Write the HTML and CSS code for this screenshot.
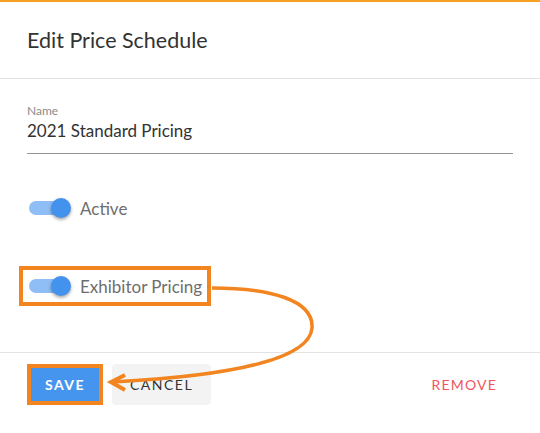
FILE: index.html
```html
<!DOCTYPE html>
<html>
<head>
<meta charset="utf-8">
<link rel="stylesheet" href="styles.css">
</head>
<body>
<div class="dialog">
  <div class="header">
    <h1 class="title">Edit Price Schedule</h1>
  </div>
  <div class="content">
    <div class="field">
      <div class="field-label">Name</div>
      <div class="field-value">2021 Standard Pricing</div>
    </div>
    <div class="switch-row">
      <span class="switch"><span class="track"></span><span class="thumb"></span></span>
      <span class="switch-label">Active</span>
    </div>
    <div class="switch-row highlight">
      <span class="switch"><span class="track"></span><span class="thumb"></span></span>
      <span class="switch-label">Exhibitor Pricing</span>
    </div>
  </div>
  <div class="actions">
    <button class="btn btn-save">SAVE</button>
    <button class="btn btn-cancel">CANCEL</button>
    <span class="spacer"></span>
    <button class="btn btn-remove">REMOVE</button>
  </div>
</div>
<svg class="annotation" width="540" height="433" viewBox="0 0 540 433">
  <path d="M212,288 C270,288 314,300 312,328 C310,355 250,375 113,382" fill="none" stroke="#f28520" stroke-width="3.5"/>
  <polyline points="125,375 111,382 125,390" fill="none" stroke="#f28520" stroke-width="4"/>
</svg>
</body>
</html>
```
FILE: styles.css
```css
html, body {
  margin: 0;
  padding: 0;
  background: #fff;
}
body {
  font-family: Lato, "Noto Sans", sans-serif;
  color: #333;
  width: 540px;
  height: 433px;
  position: relative;
  overflow: hidden;
}
.dialog {
  border-top: 2px solid #f6a024;
}
.header {
  height: 76px;
  display: flex;
  align-items: center;
  padding: 0 27px;
  border-bottom: 1px solid #e3e3e3;
}
.title {
  margin: 0;
  font-size: 21.5px;
  font-weight: 400;
  color: #333;
}
.content {
  padding: 24px 27px 0 27px;
  display: flex;
  flex-direction: column;
}
.field {
  border-bottom: 1px solid #949494;
  padding-bottom: 10px;
}
.field-label {
  font-size: 12px;
  line-height: 16px;
  color: #8a8a8a;
}
.field-value {
  font-size: 17px;
  line-height: 24px;
  color: #333;
}
.switch-row {
  display: flex;
  align-items: center;
  height: 32px;
  padding: 0 5px 0 6px;
  margin-top: 38px;
  margin-left: -4px;
  align-self: flex-start;
}
.switch-row + .switch-row {
  margin-top: 46px;
}
.highlight {
  outline: 4px solid #f28520;
}
.switch {
  position: relative;
  width: 36px;
  height: 20px;
  display: inline-flex;
  align-items: center;
}
.track {
  width: 36px;
  height: 14px;
  border-radius: 7px;
  background: #8fbdf6;
}
.thumb {
  position: absolute;
  left: 22px;
  top: 0;
  width: 20px;
  height: 20px;
  border-radius: 50%;
  background: #4392ee;
  box-shadow: 0 2px 3px rgba(0,0,0,0.25), 0 1px 4px rgba(0,0,0,0.12);
}
.switch-label {
  margin-left: 15px;
  font-size: 17px;
  color: #6e6e6e;
}
.actions {
  margin-top: 50px;
  border-top: 1px solid #e3e3e3;
  padding: 11px 27px 0 27px;
  display: flex;
  align-items: center;
}
.btn {
  font-family: inherit;
  font-size: 14px;
  letter-spacing: 1.5px;
  border: none;
  height: 41px;
  box-sizing: border-box;
  cursor: pointer;
}
.btn-save {
  width: 76px;
  background: #4595ee;
  color: #fff;
  font-weight: 700;
  border: 4px solid #f28520;
}
.btn-cancel {
  margin-left: 9px;
  width: 99px;
  background: #f3f3f3;
  color: #333;
  border-radius: 4px;
}
.spacer {
  flex: 1;
}
.btn-remove {
  background: transparent;
  color: #f2545e;
  padding: 0 16px;
  letter-spacing: 1.2px;
}
.annotation {
  position: absolute;
  left: 0;
  top: 0;
  pointer-events: none;
}
```
